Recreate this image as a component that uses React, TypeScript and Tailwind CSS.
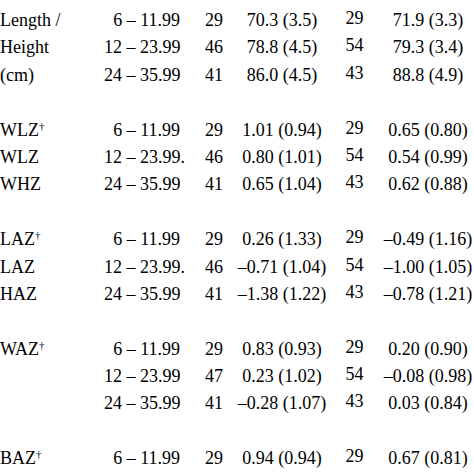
import React from "react";

type Row = { label?: string; dagger?: boolean; range: string; rangeDot?: boolean; n1: string; m1: string; n2: string; m2: string };

const groups: Row[][] = [
  [
    { label: "Length /", range: "6 – 11.99", n1: "29", m1: "70.3 (3.5)", n2: "29", m2: "71.9 (3.3)" },
    { label: "Height", range: "12 – 23.99", n1: "46", m1: "78.8 (4.5)", n2: "54", m2: "79.3 (3.4)" },
    { label: "(cm)", range: "24 – 35.99", n1: "41", m1: "86.0 (4.5)", n2: "43", m2: "88.8 (4.9)" },
  ],
  [
    { label: "WLZ", dagger: true, range: "6 – 11.99", n1: "29", m1: "1.01 (0.94)", n2: "29", m2: "0.65 (0.80)" },
    { label: "WLZ", range: "12 – 23.99", rangeDot: true, n1: "46", m1: "0.80 (1.01)", n2: "54", m2: "0.54 (0.99)" },
    { label: "WHZ", range: "24 – 35.99", n1: "41", m1: "0.65 (1.04)", n2: "43", m2: "0.62 (0.88)" },
  ],
  [
    { label: "LAZ", dagger: true, range: "6 – 11.99", n1: "29", m1: "0.26 (1.33)", n2: "29", m2: "–0.49 (1.16)" },
    { label: "LAZ", range: "12 – 23.99", rangeDot: true, n1: "46", m1: "–0.71 (1.04)", n2: "54", m2: "–1.00 (1.05)" },
    { label: "HAZ", range: "24 – 35.99", n1: "41", m1: "–1.38 (1.22)", n2: "43", m2: "–0.78 (1.21)" },
  ],
  [
    { label: "WAZ", dagger: true, range: "6 – 11.99", n1: "29", m1: "0.83 (0.93)", n2: "29", m2: "0.20 (0.90)" },
    { range: "12 – 23.99", n1: "47", m1: "0.23 (1.02)", n2: "54", m2: "–0.08 (0.98)" },
    { range: "24 – 35.99", n1: "41", m1: "–0.28 (1.07)", n2: "43", m2: "0.03 (0.84)" },
  ],
  [
    { label: "BAZ", dagger: true, range: "6 – 11.99", n1: "29", m1: "0.94 (0.94)", n2: "29", m2: "0.67 (0.81)" },
  ],
];

function TableRow({ r }: { r: Row }) {
  return (
    <div className="grid grid-cols-[104px_76px_54px_96px_49px_95px] h-[27.4px] leading-[27.4px] whitespace-nowrap">
      <div className="text-left">
        {r.label}
        {r.dagger && <span className="text-[11px] leading-none align-[6px]">†</span>}
      </div>
      <div className="text-right">
        {r.range}
        {r.rangeDot && <span className="mr-[-4.5px]">.</span>}
      </div>
      <div className="text-center pl-[14px]">{r.n1}</div>
      <div className="flex justify-center">{r.m1}</div>
      <div className="text-center">
        <span className="leading-none align-[2.5px]">{r.n2}</span>
      </div>
      <div className="flex justify-center pl-[3px]">{r.m2}</div>
    </div>
  );
}

export default function App() {
  return (
    <div className="w-[474px] h-[474px] overflow-hidden bg-white text-black text-[18px] pt-[7px] font-['Liberation_Serif','Times_New_Roman',serif]">
      <div className="flex flex-col gap-[27.4px]">
        {groups.map((g, i) => (
          <div key={i} className="flex flex-col">
            {g.map((r, j) => (
              <TableRow key={j} r={r} />
            ))}
          </div>
        ))}
      </div>
    </div>
  );
}
